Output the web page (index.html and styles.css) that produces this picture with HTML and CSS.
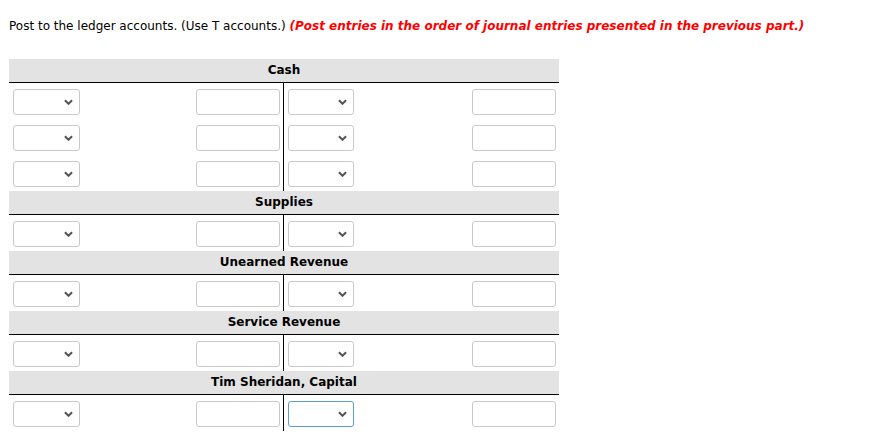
FILE: index.html
```html
<!DOCTYPE html>
<html lang="en">
<head>
    <meta charset="UTF-8">
    <meta name="viewport" content="width=device-width, initial-scale=1.0">
    <title>T Accounts</title>
    <link rel="stylesheet" href="styles.css">
</head>
<body>
    <p class="prompt">Post to the ledger accounts. (Use T accounts.) <em class="note">(Post entries in the order of journal entries presented in the previous part.)</em></p>

    <div class="ledger">
        <div class="account">
            <div class="account-title">Cash</div>
            <div class="entry">
                <div class="side">
                    <span class="pick"><select><option></option></select><svg viewBox="0 0 10 6"><polyline points="1,1 5,5 9,1"/></svg></span>
                    <input type="text">
                </div>
                <div class="side credit">
                    <span class="pick"><select><option></option></select><svg viewBox="0 0 10 6"><polyline points="1,1 5,5 9,1"/></svg></span>
                    <input type="text">
                </div>
            </div>
            <div class="entry">
                <div class="side">
                    <span class="pick"><select><option></option></select><svg viewBox="0 0 10 6"><polyline points="1,1 5,5 9,1"/></svg></span>
                    <input type="text">
                </div>
                <div class="side credit">
                    <span class="pick"><select><option></option></select><svg viewBox="0 0 10 6"><polyline points="1,1 5,5 9,1"/></svg></span>
                    <input type="text">
                </div>
            </div>
            <div class="entry">
                <div class="side">
                    <span class="pick"><select><option></option></select><svg viewBox="0 0 10 6"><polyline points="1,1 5,5 9,1"/></svg></span>
                    <input type="text">
                </div>
                <div class="side credit">
                    <span class="pick"><select><option></option></select><svg viewBox="0 0 10 6"><polyline points="1,1 5,5 9,1"/></svg></span>
                    <input type="text">
                </div>
            </div>
        </div>

        <div class="account">
            <div class="account-title">Supplies</div>
            <div class="entry">
                <div class="side">
                    <span class="pick"><select><option></option></select><svg viewBox="0 0 10 6"><polyline points="1,1 5,5 9,1"/></svg></span>
                    <input type="text">
                </div>
                <div class="side credit">
                    <span class="pick"><select><option></option></select><svg viewBox="0 0 10 6"><polyline points="1,1 5,5 9,1"/></svg></span>
                    <input type="text">
                </div>
            </div>
        </div>

        <div class="account">
            <div class="account-title">Unearned Revenue</div>
            <div class="entry">
                <div class="side">
                    <span class="pick"><select><option></option></select><svg viewBox="0 0 10 6"><polyline points="1,1 5,5 9,1"/></svg></span>
                    <input type="text">
                </div>
                <div class="side credit">
                    <span class="pick"><select><option></option></select><svg viewBox="0 0 10 6"><polyline points="1,1 5,5 9,1"/></svg></span>
                    <input type="text">
                </div>
            </div>
        </div>

        <div class="account">
            <div class="account-title">Service Revenue</div>
            <div class="entry">
                <div class="side">
                    <span class="pick"><select><option></option></select><svg viewBox="0 0 10 6"><polyline points="1,1 5,5 9,1"/></svg></span>
                    <input type="text">
                </div>
                <div class="side credit">
                    <span class="pick"><select><option></option></select><svg viewBox="0 0 10 6"><polyline points="1,1 5,5 9,1"/></svg></span>
                    <input type="text">
                </div>
            </div>
        </div>

        <div class="account">
            <div class="account-title">Tim Sheridan, Capital</div>
            <div class="entry">
                <div class="side">
                    <span class="pick"><select><option></option></select><svg viewBox="0 0 10 6"><polyline points="1,1 5,5 9,1"/></svg></span>
                    <input type="text">
                </div>
                <div class="side credit">
                    <span class="pick focused"><select><option></option></select><svg viewBox="0 0 10 6"><polyline points="1,1 5,5 9,1"/></svg></span>
                    <input type="text">
                </div>
            </div>
        </div>
    </div>
</body>
</html>
```

FILE: styles.css
```css
body {
    margin: 0;
    padding: 0;
    font-family: "DejaVu Sans", Verdana, sans-serif;
    color: #000;
    background-color: #fff;
}

.prompt {
    margin: 0;
    padding: 18px 9px 0;
    font-size: 12px;
    line-height: 16px;
}

.note {
    color: #ff0000;
    font-weight: bold;
}

.ledger {
    width: 550px;
    margin: 25px 0 0 9px;
}

.account-title {
    height: 23px;
    line-height: 23px;
    background-color: #e3e3e3;
    border-bottom: 1px solid #000;
    text-align: center;
    font-size: 12px;
    font-weight: bold;
}

.entry {
    display: grid;
    grid-template-columns: 274px 1fr;
    height: 36px;
}

.side {
    display: flex;
    justify-content: space-between;
    align-items: flex-start;
    padding: 6px 3px 0 4px;
}

.credit {
    border-left: 1px solid #000;
}

.pick {
    position: relative;
    display: block;
}

.pick select {
    display: block;
    width: 67px;
    height: 26px;
    margin: 0;
    padding: 0 4px;
    border: 1px solid #c9c9c9;
    border-radius: 3px;
    background-color: #fff;
    -webkit-appearance: none;
    appearance: none;
    font-family: inherit;
}

.credit .pick select {
    width: 66px;
}

.pick svg {
    position: absolute;
    right: 7px;
    top: 10px;
    width: 9px;
    height: 6px;
    fill: none;
    stroke: #555;
    stroke-width: 2.2;
    pointer-events: none;
}

.pick.focused select {
    border-color: #5e9ed6;
}

.side input {
    width: 84px;
    height: 26px;
    margin: 0;
    padding: 0 4px;
    box-sizing: border-box;
    border: 1px solid #c9c9c9;
    border-radius: 3px;
    font-family: inherit;
}
```
